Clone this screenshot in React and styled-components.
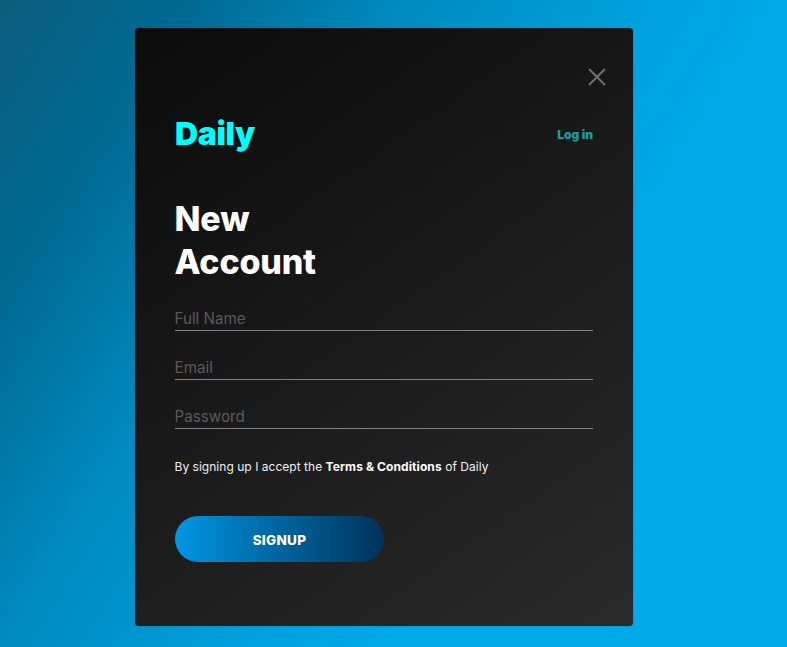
import React from "react";
import styled, { createGlobalStyle } from "styled-components";

const Global = createGlobalStyle`
  html, body { margin: 0; padding: 0; height: 100%; }
  body { font-family: Inter, "Liberation Sans", sans-serif; }
  input::placeholder { color: #5a5a5a; opacity: 1; }
`;

const Page = styled.div`
  width: 787px;
  height: 647px;
  overflow: hidden;
  display: flex;
  justify-content: center;
  padding: 28px 19px 0 0;
  box-sizing: border-box;
  background: linear-gradient(122deg, #0d5c7c 0%, #006a92 16%, #008abf 34%, #00a0dc 54%, #00a9e8 66%, #00a9e8 100%);
`;

const Card = styled.div`
  width: 498px;
  height: 598px;
  box-sizing: border-box;
  padding: 40px 40px 0;
  border-radius: 4px;
  background: linear-gradient(145deg, #0b0b0b 0%, #1a1a1a 50%, #2a2a2a 100%);
  box-shadow: 0 0 1px rgba(0, 0, 0, 0.5);
  display: flex;
  flex-direction: column;
`;

const CloseRow = styled.div`
  display: flex;
  justify-content: flex-end;
  height: 18px;
  margin-right: -13px;
`;

const CloseButton = styled.button`
  width: 18px;
  height: 18px;
  padding: 0;
  border: 0;
  background: none;
  color: #6f6f6f;
  display: block;
  svg { display: block; }
`;

const Header = styled.div`
  display: flex;
  justify-content: space-between;
  align-items: center;
  margin-top: 28px;
  height: 40px;
`;

const Logo = styled.div`
  color: #00ffff;
  font-size: 32px;
  font-weight: 900;
  letter-spacing: -0.4px;
  line-height: 40px;
`;

const LoginLink = styled.a`
  color: #1f9a9e;
  font-size: 12px;
  font-weight: 900;
  line-height: 16px;
  margin-top: 2px;
`;

const Title = styled.h1`
  margin: 43px 0 0 -0.5px;
  color: #fff;
  font-size: 34px;
  font-weight: 800;
  line-height: 43px;
  letter-spacing: -0.2px;
`;

const Form = styled.form`
  margin-top: 14px;
  display: flex;
  flex-direction: column;
  gap: 15px;
`;

const Field = styled.input`
  display: block;
  width: 100%;
  height: 34px;
  box-sizing: border-box;
  padding: 11px 0 1px;
  background: none;
  border: 0;
  border-bottom: 1px solid #828282;
  border-radius: 0;
  outline: none;
  color: #fff;
  font-family: Inter, "Liberation Sans", sans-serif;
  font-size: 15.2px;
  line-height: 20px;
  text-indent: -0.5px;
`;

const Terms = styled.p`
  margin: 30px 0 0 -0.5px;
  color: #f0f0f0;
  font-size: 12px;
  line-height: 16px;
  letter-spacing: 0.03px;
  strong { color: #fff; font-weight: 700; letter-spacing: 0.1px; }
`;

const SignupButton = styled.button`
  margin-top: 41px;
  width: 209px;
  height: 46px;
  padding: 2px 0 0;
  border: 0;
  border-radius: 23px;
  background: linear-gradient(90deg, #0096e4 0%, #00325a 100%);
  color: #fff;
  font-family: Inter, "Liberation Sans", sans-serif;
  font-size: 13.5px;
  font-weight: 800;
  letter-spacing: 0.3px;
`;

export default function App() {
  return (
    <Page>
      <Global />
      <Card>
        <CloseRow>
          <CloseButton aria-label="Close">
            <svg width="18" height="18" viewBox="0 0 18 18" fill="none" stroke="currentColor" strokeWidth="2">
              <path d="M1 1L17 17M17 1L1 17" />
            </svg>
          </CloseButton>
        </CloseRow>
        <Header>
          <Logo>Daily</Logo>
          <LoginLink>Log in</LoginLink>
        </Header>
        <Title>New<br />Account</Title>
        <Form onSubmit={(e) => e.preventDefault()}>
          <Field placeholder="Full Name" />
          <Field placeholder="Email" />
          <Field placeholder="Password" type="password" />
        </Form>
        <Terms>By signing up I accept the <strong>Terms &amp; Conditions</strong> of Daily</Terms>
        <SignupButton>SIGNUP</SignupButton>
      </Card>
    </Page>
  );
}
